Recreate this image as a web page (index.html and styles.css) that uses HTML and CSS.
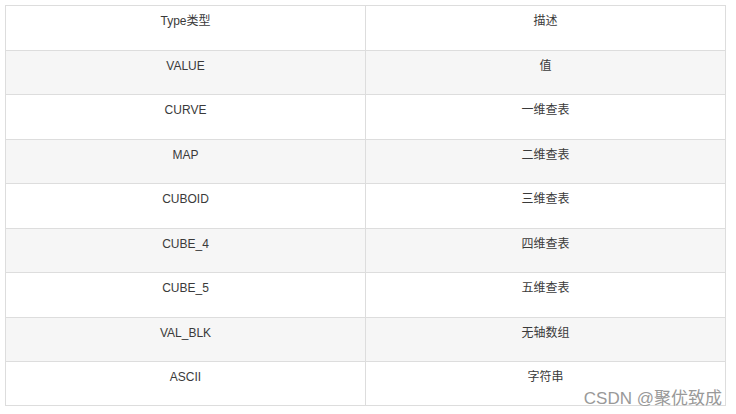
FILE: index.html
```html
<!DOCTYPE html>
<html lang="zh-CN">
<head>
<meta charset="utf-8">
<title>Type类型</title>
<link rel="stylesheet" href="styles.css">
</head>
<body>
<div class="wrap">
  <table class="types">
    <thead>
      <tr class="r-a"><th>Type类型</th><th>描述</th></tr>
    </thead>
    <tbody>
      <tr class="r-b alt"><td>VALUE</td><td>值</td></tr>
      <tr class="r-a"><td>CURVE</td><td>一维查表</td></tr>
      <tr class="r-b alt"><td>MAP</td><td>二维查表</td></tr>
      <tr class="r-a"><td>CUBOID</td><td>三维查表</td></tr>
      <tr class="r-b alt"><td>CUBE_4</td><td>四维查表</td></tr>
      <tr class="r-a"><td>CUBE_5</td><td>五维查表</td></tr>
      <tr class="r-b alt"><td>VAL_BLK</td><td>无轴数组</td></tr>
      <tr class="r-b"><td>ASCII</td><td>字符串</td></tr>
    </tbody>
  </table>
  <div class="watermark">CSDN @聚优致成</div>
</div>
</body>
</html>
```
FILE: styles.css
```css
html, body {
  margin: 0;
  padding: 0;
  background: #fff;
}
body {
  font-family: "Liberation Sans", "Noto Sans CJK SC", sans-serif;
  color: #3a3a3a;
}
.wrap {
  position: relative;
  padding: 5px 0 0 5px;
  width: 721px;
}
.types {
  border-collapse: collapse;
  width: 721px;
  table-layout: fixed;
  font-size: 12px;
  line-height: 22px;
}
.types th,
.types td {
  border: 1px solid #ddd;
  text-align: center;
  vertical-align: top;
  padding: 4px 8px 0;
  font-weight: normal;
}
.r-a th, .r-a td { height: 40px; }
.r-b td { height: 39px; }
.alt { background: #f6f6f6; }
.watermark {
  position: absolute;
  right: 4px;
  bottom: -3px;
  font-size: 17px;
  line-height: 20px;
  color: #999;
  font-family: "Liberation Sans", "Noto Sans CJK SC", sans-serif;
}
```
